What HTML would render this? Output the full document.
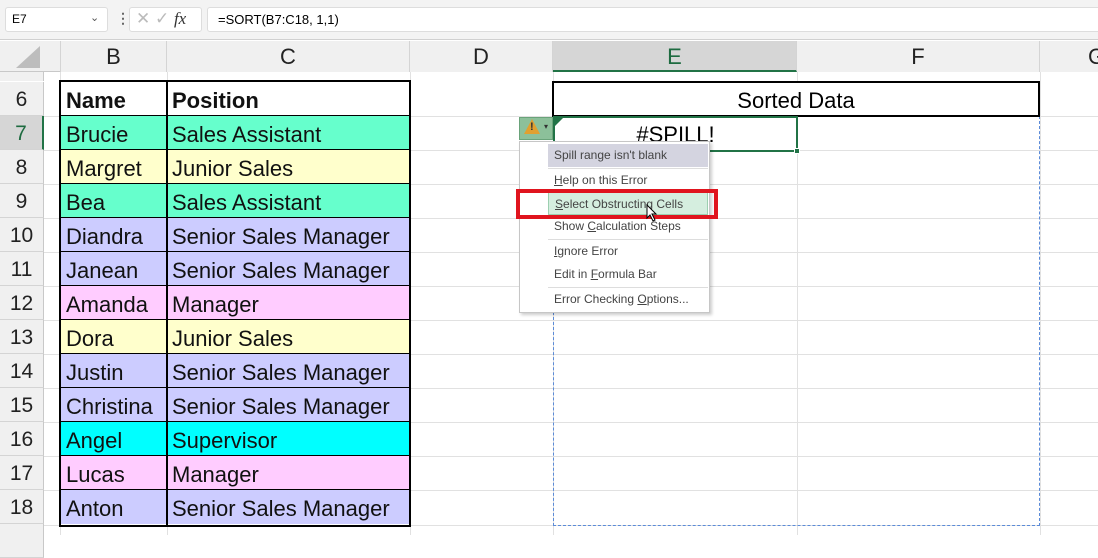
<!DOCTYPE html><html><head><style>
body{margin:0;width:1098px;height:535px;overflow:hidden;background:#fff;font-family:"Liberation Sans",sans-serif;position:relative}
div{position:absolute;box-sizing:border-box}
.rh{left:0;width:44px;height:34px;background:#f0f0f0;border-bottom:1px solid #d4d4d4;border-right:1px solid #c8c8c8;font-size:21px;text-align:center;line-height:36px;color:#222}
.ch{top:41px;height:31px;background:#f0f0f0;border-right:1px solid #d4d4d4;font-size:22px;text-align:center;line-height:31px;color:#222}
.gl{left:44px;width:1054px;height:1px;background:#e1e1e1}
.vl{top:72px;width:1px;height:463px;background:#e1e1e1}
.c{height:34px;font-size:22px;line-height:37px;padding-left:5px;color:#111;border:1px solid #000;border-width:0 0 1px 0}
.mi{left:548px;width:160px;height:23px;font-size:12px;line-height:23px;padding-left:6px;color:#444}
.sep{left:548px;width:160px;height:1px;background:#ddd}
</style></head><body>
<div style="left:0;top:0;width:1098px;height:40px;background:#f3f3f3;border-bottom:1px solid #d0d0d0"></div>
<div style="left:5px;top:7px;width:103px;height:25px;background:#fff;border:1px solid #ddd;border-radius:3px;font-size:12px;line-height:23px;padding-left:6px">E7<span style="position:absolute;left:84px;top:-1px;font-size:11px;color:#555">&#8964;</span></div>
<div style="left:116px;top:10px;font-size:14px;color:#666;font-weight:bold">&#8942;</div>
<div style="left:129px;top:7px;width:73px;height:25px;background:#fff;border:1px solid #ddd;border-radius:3px;color:#bbb;font-size:17px;line-height:22px;padding-left:6px">✕ ✓ <i style="font-family:'Liberation Serif';color:#333">fx</i></div>
<div style="left:207px;top:7px;width:900px;height:25px;background:#fff;border:1px solid #ddd;border-radius:3px;font-size:13px;line-height:23px;padding-left:10px">=SORT(B7:C18, 1,1)</div>
<div style="left:0;top:41px;width:1098px;height:31px;background:#f0f0f0;border-bottom:1px solid #c8c8c8"></div>
<div style="left:16px;top:46px;width:0;height:0;border-left:24px solid transparent;border-bottom:22px solid #bdbdbd"></div>
<div class="ch" style="left:60px;width:107px;border-left:1px solid #d4d4d4">B</div>
<div class="ch" style="left:167px;width:243px">C</div>
<div class="ch" style="left:410px;width:143px">D</div>
<div class="ch" style="left:553px;width:244px;background:#d6d6d6;color:#1e6b40;border-bottom:2px solid #217346">E</div>
<div class="ch" style="left:797px;width:243px">F</div>
<div class="ch" style="left:1040px;width:80px;text-align:left;padding-left:48px">G</div>
<div style="left:0;top:72px;width:44px;height:9px;background:#f0f0f0;border-right:1px solid #c8c8c8"></div>
<div class="gl" style="top:116px"></div><div class="gl" style="top:150px"></div><div class="gl" style="top:184px"></div><div class="gl" style="top:218px"></div><div class="gl" style="top:252px"></div><div class="gl" style="top:286px"></div><div class="gl" style="top:320px"></div><div class="gl" style="top:354px"></div><div class="gl" style="top:388px"></div><div class="gl" style="top:422px"></div><div class="gl" style="top:456px"></div><div class="gl" style="top:490px"></div><div class="gl" style="top:525px"></div>
<div class="vl" style="left:60px"></div><div class="vl" style="left:167px"></div><div class="vl" style="left:410px"></div><div class="vl" style="left:553px"></div><div class="vl" style="left:797px"></div><div class="vl" style="left:1040px"></div>
<div class="rh" style="top:82px">6</div>
<div class="rh" style="top:116px;background:#d6d6d6;border-right:2px solid #217346;color:#1e6b40">7</div>
<div class="rh" style="top:150px">8</div><div class="rh" style="top:184px">9</div><div class="rh" style="top:218px">10</div><div class="rh" style="top:252px">11</div><div class="rh" style="top:286px">12</div><div class="rh" style="top:320px">13</div><div class="rh" style="top:354px">14</div><div class="rh" style="top:388px">15</div><div class="rh" style="top:422px">16</div><div class="rh" style="top:456px">17</div><div class="rh" style="top:490px">18</div><div class="rh" style="top:524px"></div>
<div style="left:59px;top:80px;width:352px;height:447px;border:2px solid #000"></div>
<div style="left:61px;top:82px;width:348px">
<div class="c" style="position:relative;width:348px;font-weight:bold;background:#fff"><span style="position:absolute;left:5px">Name</span><span style="position:absolute;left:111px">Position</span></div>
</div>
<div id="rows" style="left:61px;top:116px;width:348px"></div>
<div style="left:166px;top:82px;width:2px;height:444px;background:#000"></div>
<div style="left:553px;top:116px;width:487px;height:410px;border:1px dashed #5b8bd8"></div>
<div style="left:552px;top:81px;width:488px;height:36px;border:2px solid #000;font-size:22px;text-align:center;line-height:35px;background:#fff">Sorted Data</div>
<div style="left:553px;top:116px;width:245px;height:36px;border:2px solid #217346;font-size:22px;text-align:center;line-height:33px">#SPILL!</div>
<div style="left:555px;top:118px;width:0;height:0;border-top:8px solid #217346;border-right:8px solid transparent"></div>
<div style="left:794px;top:148px;width:6px;height:6px;background:#217346;border:1px solid #fff"></div>
<div style="left:519px;top:117px;width:34px;height:23px;background:#8cc09a;border:1px solid #6aa37a"></div>
<div style="left:524px;top:119px;width:0;height:0;border-left:8px solid transparent;border-right:8px solid transparent;border-bottom:15px solid #e0a030"></div>
<div style="left:530px;top:121px;font-size:11px;font-weight:bold;color:#333">!</div>
<div style="left:544px;top:122px;font-size:8px;color:#333">▾</div>
<div style="left:519px;top:141px;width:191px;height:172px;background:#fff;border:1px solid #c6c6c6;box-shadow:2px 2px 3px rgba(0,0,0,.2)"></div>
<div class="mi" style="top:144px;background:#d4d4e0">Spill range isn't blank</div>
<div class="sep" style="top:168px"></div>
<div class="mi" style="top:169px"><u>H</u>elp on this Error</div>
<div class="mi" style="top:192px;background:#d5eedf;border:1px solid #9ccfb0"><u>S</u>elect Obstructing Cells</div>
<div class="mi" style="top:215px">Show <u>C</u>alculation Steps</div>
<div class="sep" style="top:239px"></div>
<div class="mi" style="top:240px"><u>I</u>gnore Error</div>
<div class="mi" style="top:263px">Edit in <u>F</u>ormula Bar</div>
<div class="sep" style="top:287px"></div>
<div class="mi" style="top:288px">Error Checking <u>O</u>ptions...</div>
<div style="left:516px;top:189px;width:202px;height:30px;border:4px solid #e0141e"></div>
<svg style="position:absolute;left:646px;top:204px" width="12" height="18"><path d="M1 1 L1 14 L4 11 L7 17 L9 16 L6 10 L10 10 Z" fill="#fff" stroke="#000" stroke-width="1"/></svg>
<script>
var d=[["Brucie","Sales Assistant","#66ffcc"],["Margret","Junior Sales","#ffffcc"],["Bea","Sales Assistant","#66ffcc"],["Diandra","Senior Sales Manager","#ccccff"],["Janean","Senior Sales Manager","#ccccff"],["Amanda","Manager","#ffccff"],["Dora","Junior Sales","#ffffcc"],["Justin","Senior Sales Manager","#ccccff"],["Christina","Senior Sales Manager","#ccccff"],["Angel","Supervisor","#00ffff"],["Lucas","Manager","#ffccff"],["Anton","Senior Sales Manager","#ccccff"]];
var h="";d.forEach(function(r,i){h+='<div class="c" style="position:relative;width:348px;background:'+r[2]+(i==11?';border-bottom:0':'')+'"><span style="position:absolute;left:5px">'+r[0]+'</span><span style="position:absolute;left:111px">'+r[1]+'</span></div>';});
document.getElementById("rows").innerHTML=h;
</script>
</body></html>
